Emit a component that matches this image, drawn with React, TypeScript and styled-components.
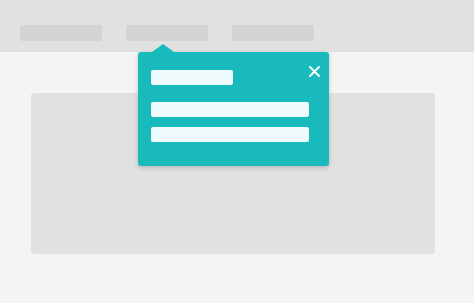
import React from "react";
import styled, {createGlobalStyle} from 'styled-components'

const GlobalStyle = createGlobalStyle`
html, body {
margin: 0;
padding: 0;
background: #f4f4f4;
font-family: "Liberation Sans", Arial, sans-serif;
}
`

export const Page = styled.div`
width: 474px;
height: 303px;
background: #f4f4f4;
overflow: hidden;
`
export const TopBar = styled.div`
height: 52px;
background: #e1e1e1;
display: flex;
align-items: flex-start;
padding: 25px 0 0 20px;
box-sizing: border-box;
gap: 24px;
`
export const NavItem = styled.div`
position: relative;
width: 82px;
height: 16px;
background: #d4d4d4;
border-radius: 2px;
`
export const Popup = styled.div`
position: absolute;
top: 27px;
left: 12px;
width: 191px;
height: 114px;
box-sizing: border-box;
background: #18babb;
border-radius: 3px;
box-shadow: 0 2px 5px rgba(0, 0, 0, 0.18);
padding: 18px 20px 0 13px;
display: flex;
flex-direction: column;
z-index: 2;
&::before{
content: '';
position: absolute;
top: -8px;
left: 14px;
border-left: 11px solid transparent;
border-right: 11px solid transparent;
border-bottom: 8px solid #18babb;
}
`
export const PopupHead = styled.div`
display: flex;
justify-content: space-between;
align-items: flex-start;
margin-bottom: 17px;
`
export const Line = styled.div<{w: string}>`
width: ${props => props.w};
height: 15px;
background: #eefafb;
border-radius: 2px;
& + & {
margin-top: 10px;
}
`
export const Close = styled.button`
border: none;
background: transparent;
padding: 0;
margin: -6px -12px 0 0;
width: 14px;
height: 14px;
cursor: pointer;
display: flex;
align-items: center;
justify-content: center;
`
export const Content = styled.div`
padding: 41px 39px 0 31px;
`
export const Card = styled.div`
height: 161px;
background: #e1e1e1;
border-radius: 3px;
`

export default function App() {
    return <Page>
        <GlobalStyle/>
        <TopBar>
            <NavItem/>
            <NavItem>
                <Popup>
                    <PopupHead>
                        <Line w='82px'/>
                        <Close aria-label='close'>
                            <svg width="11" height="11" viewBox="0 0 11 11">
                                <path d="M1 1 L10 10 M10 1 L1 10" stroke="#ffffff" strokeWidth="1.8" strokeLinecap="round"/>
                            </svg>
                        </Close>
                    </PopupHead>
                    <Line w='158px'/>
                    <Line w='158px'/>
                </Popup>
            </NavItem>
            <NavItem/>
        </TopBar>
        <Content>
            <Card/>
        </Content>
    </Page>
}
